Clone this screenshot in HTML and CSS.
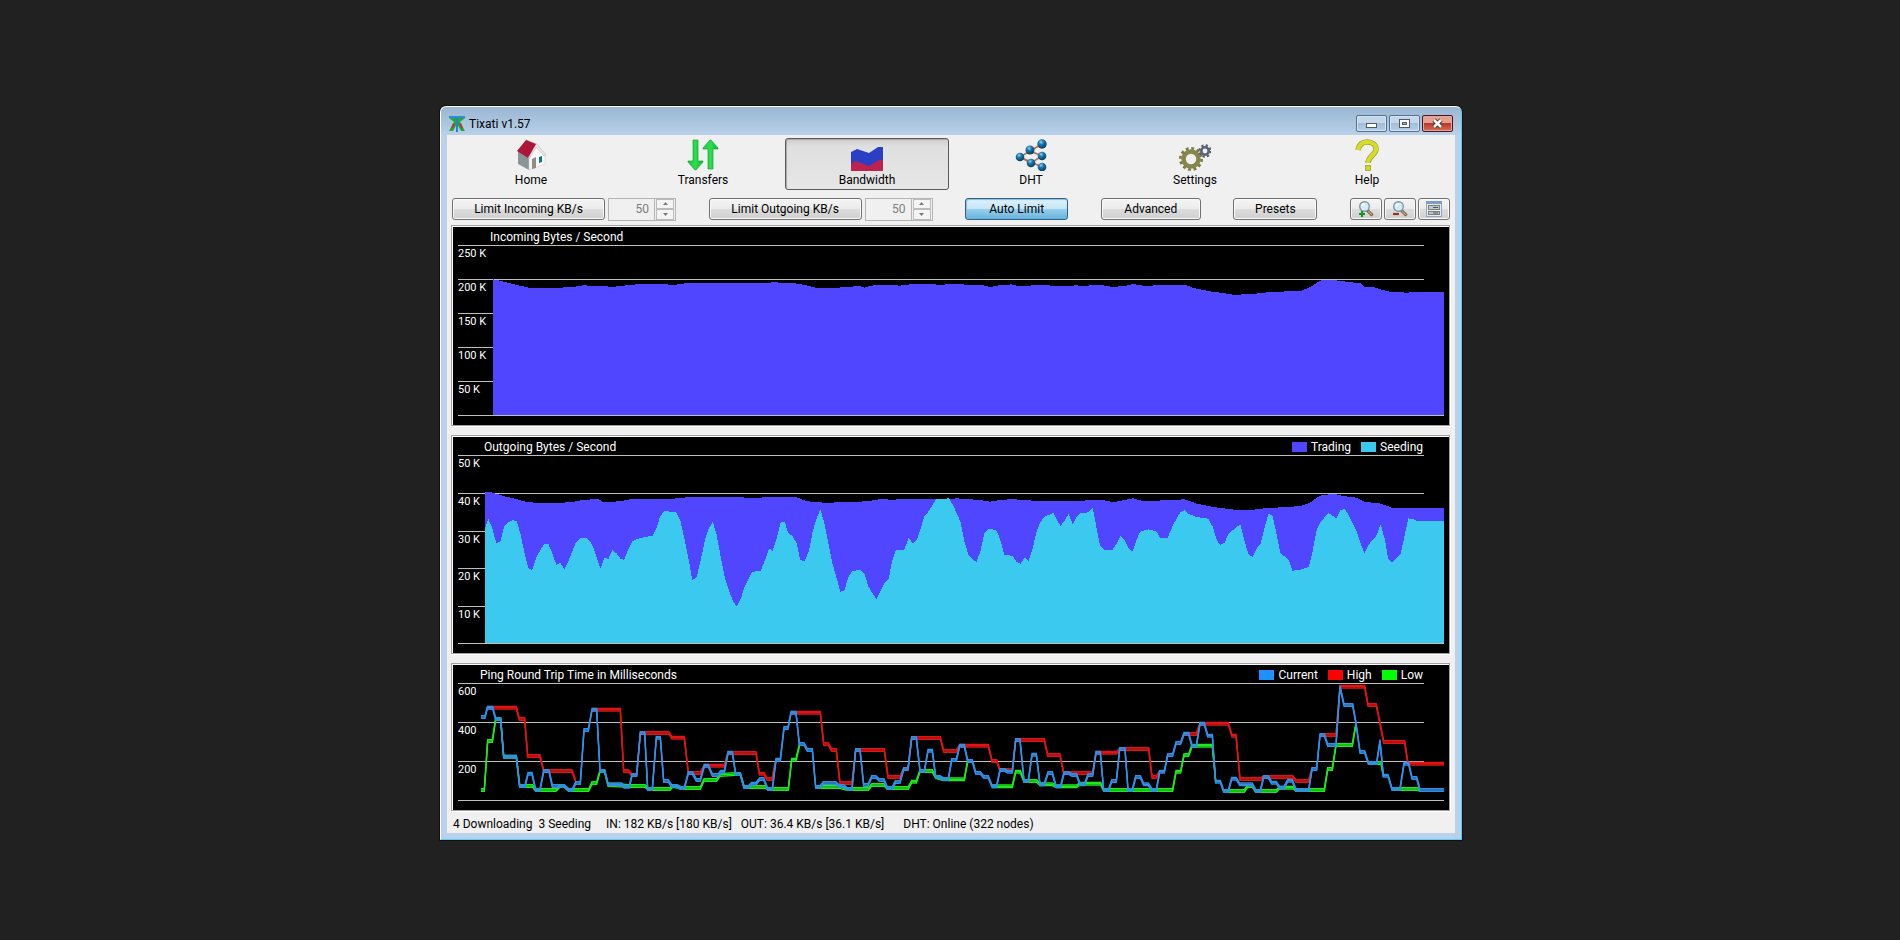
FILE: index.html
```html
<!DOCTYPE html>
<html lang="en">
<head>
<meta charset="utf-8">
<title>Tixati v1.57</title>
<link rel="stylesheet" href="styles.css">
</head>
<body>
<main class="window">
  <header class="titlebar">
    <svg class="app-icon" viewBox="0 0 16 16" aria-hidden="true">
      <path d="M0 0h16v2l-5 4 5 9h-4L8 8l-4 7H0l5-9-5-4z" fill="#22a83c"/>
      <path d="M0 0h16v2H0z" fill="#2a8fd0"/>
      <path d="M4 7l2 1-3 5-1-1zM12 7l-2 1 3 5 1-1z" fill="#b23a3a"/>
      <path d="M7 2h2v14H7z" fill="#2b7fd0"/>
    </svg>
    <h1 class="title">Tixati v1.57</h1>
    <div class="window-buttons">
      <button class="win-btn" type="button" aria-label="Minimize"><svg viewBox="0 0 29 15"><rect x="9.500" y="7.500" width="10" height="4" fill="#fff" stroke="#4c5a6c"/></svg></button>
      <button class="win-btn" type="button" aria-label="Maximize"><svg viewBox="0 0 29 15"><rect x="9.500" y="3.500" width="10" height="8" fill="#fff" stroke="#4c5a6c"/><rect x="12.500" y="6.500" width="4" height="2" fill="#9db6d2" stroke="#4c5a6c"/></svg></button>
      <button class="win-btn win-close" type="button" aria-label="Close"><svg viewBox="0 0 29 15"><path d="M11 4l7 7M18 4l-7 7" stroke="#5a2a2a" stroke-width="4.500"/><path d="M11 4l7 7M18 4l-7 7" stroke="#fff" stroke-width="2.500"/></svg></button>
    </div>
  </header>

  <div class="client">
    <nav class="tabs">
      <button class="tab tab-first" type="button">
        <svg viewBox="0 0 32 32">
          <defs><linearGradient id="wall" x1="0" x2="1"><stop offset="0" stop-color="#f4f4f4"/><stop offset="1" stop-color="#fff"/></linearGradient></defs>
          <path d="M3 12l11 7v12L3 25z" fill="#8b9597"/>
          <path d="M14 19l7-13 9 11v8l-16 6z" fill="url(#wall)" stroke="#c9cfd0" stroke-width=".6"/>
          <path d="M11 1l11 4 9 11-2 1-8-9-7 12-1-1 7-13z" fill="#e8e8ea" stroke="#99a" stroke-width=".4"/>
          <path d="M11 1l10 4-8 14L2 12z" fill="#ac1638"/>
          <path d="M17 20l4-2v11l-4 1z" fill="#958a82"/>
          <path d="M24 18l3-1v6l-3 1z" fill="#0c7296"/>
        </svg>
        Home
      </button>
      <button class="tab" type="button">
        <svg viewBox="0 0 32 32">
          <defs><linearGradient id="arrow" x1="0" x2="1"><stop offset="0" stop-color="#1fc540"/><stop offset=".5" stop-color="#27e04c"/><stop offset="1" stop-color="#12b535"/></linearGradient></defs>
          <path d="M6 1h5v21h5v1l-7 8H8l-7-8v-1h5z" fill="url(#arrow)" stroke="#22a23c" stroke-width=".7"/>
          <path d="M21 30h5V10h5V9l-7-8h-1l-7 8v1h5z" fill="url(#arrow)" stroke="#22a23c" stroke-width=".7"/>
        </svg>
        Transfers
      </button>
      <button class="tab tab-active" type="button" aria-pressed="true">
        <svg viewBox="0 0 32 32">
          <path d="M0 13l6-3 12 4L27 8h5v24H0z" fill="#2b3fc4"/>
          <path d="M0 25l4-3 3 1 11 4 10-6h4v11H0z" fill="#bd2150"/>
        </svg>
        Bandwidth
      </button>
      <button class="tab" type="button">
        <svg viewBox="0 0 32 32">
          <defs><radialGradient id="ball" cx=".4" cy=".3" r=".7"><stop offset="0" stop-color="#8fd4ee"/><stop offset=".4" stop-color="#1a78ab"/><stop offset="1" stop-color="#063e62"/></radialGradient></defs>
          <path d="M5 18l10-6L27 5M15 12l12 5-11 7-11-6 22 10" fill="none" stroke="#c4684a" stroke-width="1.600"/>
          <g fill="url(#ball)"><circle cx="27" cy="5" r="4.700"/><circle cx="15" cy="11" r="4.500"/><circle cx="5" cy="18" r="4.300"/><circle cx="27" cy="17" r="4.300"/><circle cx="16" cy="24" r="4.300"/><circle cx="27" cy="28" r="4.300"/></g>
        </svg>
        DHT
      </button>
      <button class="tab" type="button">
        <svg viewBox="0 0 32 32">
          <circle cx="12" cy="20" r="7.500" fill="none" stroke="#85854c" stroke-width="4.500"/>
          <circle cx="12" cy="20" r="10.700" fill="none" stroke="#7b7b46" stroke-width="2.600" stroke-dasharray="2.900 2.700"/>
          <circle cx="26" cy="12" r="3.700" fill="none" stroke="#5a6273" stroke-width="2.600"/>
          <circle cx="26" cy="12" r="5.700" fill="none" stroke="#535b6c" stroke-width="2" stroke-dasharray="2.300 2.178"/>
        </svg>
        Settings
      </button>
      <button class="tab tab-last" type="button">
        <svg viewBox="0 0 32 32">
          <path d="M7 11c1-5 4-8 9-8 6 0 9 3 9 7 0 6-8 7-8 14" fill="none" stroke="#a3a520" stroke-width="5.500"/>
          <path d="M7 11c1-5 4-8 9-8 6 0 9 3 9 7 0 6-8 7-8 14" fill="none" stroke="#d6dc2c" stroke-width="4"/>
          <rect x="14.500" y="26.500" width="5" height="5" fill="#d0d628" stroke="#a3a520" stroke-width=".8"/>
        </svg>
        Help
      </button>
    </nav>

    <div class="controls">
      <div class="limit">
        <button class="btn btn-limit" type="button">Limit Incoming KB/s</button>
        <div class="spinner">
          <input class="spin-input" type="text" value="50" aria-label="Incoming limit in KB/s" disabled>
          <div class="spin-arrows">
            <button class="spin-btn" type="button" aria-label="Increase incoming limit" disabled><svg viewBox="0 0 5 3"><path d="M0 3l2.500-3L5 3z"/></svg></button>
            <button class="spin-btn" type="button" aria-label="Decrease incoming limit" disabled><svg viewBox="0 0 5 3"><path d="M0 0l2.500 3L5 0z"/></svg></button>
          </div>
        </div>
      </div>
      <div class="limit">
        <button class="btn btn-limit" type="button">Limit Outgoing KB/s</button>
        <div class="spinner">
          <input class="spin-input" type="text" value="50" aria-label="Outgoing limit in KB/s" disabled>
          <div class="spin-arrows">
            <button class="spin-btn" type="button" aria-label="Increase outgoing limit" disabled><svg viewBox="0 0 5 3"><path d="M0 3l2.500-3L5 3z"/></svg></button>
            <button class="spin-btn" type="button" aria-label="Decrease outgoing limit" disabled><svg viewBox="0 0 5 3"><path d="M0 0l2.500 3L5 0z"/></svg></button>
          </div>
        </div>
      </div>
      <button class="btn btn-auto" type="button" aria-pressed="true">Auto Limit</button>
      <button class="btn btn-advanced" type="button">Advanced</button>
      <button class="btn btn-presets" type="button">Presets</button>
      <div class="tools">
        <button class="btn btn-icon" type="button" aria-label="Zoom in">
          <svg viewBox="0 0 16 16"><path d="M9 9l5.500 5.500" stroke="#5c4a38" stroke-width="3"/><path d="M10 10l4 4" stroke="#d8a868" stroke-width="1.500"/><circle cx="6.500" cy="5.500" r="4.800" fill="#d4ecf8" stroke="#7d96ac" stroke-width="1.400"/><path d="M4 5a3 3 0 0 1 3-2" fill="none" stroke="#fff" stroke-width="1.400"/><path d="M4 10v6M1 13h6" stroke="#0d9a1c" stroke-width="2.200"/></svg>
        </button>
        <button class="btn btn-icon" type="button" aria-label="Zoom out">
          <svg viewBox="0 0 16 16"><path d="M9 9l5.500 5.500" stroke="#5c4a38" stroke-width="3"/><path d="M10 10l4 4" stroke="#d8a868" stroke-width="1.500"/><circle cx="6.500" cy="5.500" r="4.800" fill="#d4ecf8" stroke="#7d96ac" stroke-width="1.400"/><path d="M4 5a3 3 0 0 1 3-2" fill="none" stroke="#fff" stroke-width="1.400"/><path d="M1 13h6" stroke="#a33212" stroke-width="2.200"/></svg>
        </button>
        <button class="btn btn-icon" type="button" aria-label="View layout">
          <svg viewBox="0 0 16 16"><rect x=".5" y=".5" width="15" height="15" fill="#e4ebf5" stroke="#93a5c0"/><path d="M0 0h16v3H0z" fill="#7f9bc6"/><rect x="2.500" y="4.500" width="11" height="4" fill="#c4c8c4" stroke="#7a827c"/><rect x="2.500" y="10.500" width="11" height="3" fill="#c4c8c4" stroke="#7a827c"/><path d="M7 6.500h5M7 12h5" stroke="#4c5450"/></svg>
        </button>
      </div>
    </div>

    <div class="panels">
      <section class="panel">
        <div class="panel-head head-incoming"><h2 class="panel-title">Incoming Bytes / Second</h2></div>
        <svg class="plot" viewBox="39 75 2988 540">
          <path class="grid" d="M54 76.500H2952M54 178.500H2952M54 280.500H159M54 382.500H159M54 484.500H159"/>
          <path class="fill-trading" d="M159 587V178L180 182 210 190 240 197 270 204 340 205 375 202 400 201 430 196 500 199 515 201 560 196 600 192 680 193 700 195 750 188 800 190 870 188 960 190 1000 187 1060 189 1090 194 1130 204 1180 204 1220 201 1260 198 1273 203 1290 197 1340 194 1380 197 1410 193 1450 192 1500 194 1530 193 1570 193 1590 196 1630 196 1652 201 1670 197 1715 193 1730 197 1820 196 1870 199 1910 196 1930 199 1950 196 1990 196 2020 201 2060 197 2080 192 2110 197 2170 196 2240 196 2260 204 2310 214 2350 219 2380 224 2430 223 2470 218 2540 214 2585 212 2615 199 2640 182 2660 179 2695 182 2725 186 2762 190 2775 201 2800 201 2825 209 2850 215 2900 218 2930 216 3012 216V587z"/>
          <path class="grid" d="M54 586.500H3012"/>
          <g class="axis"><text x="54" y="110">250 K</text><text x="54" y="212">200 K</text><text x="54" y="314">150 K</text><text x="54" y="416">100 K</text><text x="54" y="518">50 K</text></g>
        </svg>
      </section>

      <section class="panel">
        <div class="panel-head head-outgoing">
          <h2 class="panel-title">Outgoing Bytes / Second</h2>
          <ul class="legend"><li class="key key-trading">Trading</li><li class="key key-seeding">Seeding</li></ul>
        </div>
        <svg class="plot" viewBox="39 90 2988 594">
          <path class="grid" d="M54 91.500H2952M54 205.500H2952M54 319.500H135M54 430.500H135M54 544.500H135"/>
          <path class="fill-trading" d="M135 655V202L155 202 190 213 220 220 260 231 300 234 370 233 410 229 430 224 475 223 490 231 540 229 580 221 700 221 760 215 900 217 950 219 990 215 1040 215 1070 217 1090 225 1120 232 1170 233 1220 231 1280 229 1330 221 1350 225 1400 221 1480 221 1530 222 1550 220 1620 225 1650 230 1680 225 1720 222 1750 226 1880 229 1920 228 1960 224 2000 227 2020 232 2040 228 2080 220 2110 229 2170 226 2235 223 2270 236 2320 246 2390 255 2440 254 2490 248 2540 247 2585 242 2610 233 2640 212 2680 206 2710 213 2750 218 2775 232 2810 233 2835 240 2855 248 2900 250 3012 249V655z"/>
          <path class="fill-seeding" d="M135 656V310L145 282 157 310 169 355 181 350 192 306 205 292 218 285 231 290 242 330 255 390 265 430 277 435 290 395 300 377 313 357 325 357 337 385 349 419 361 414 373 433 385 410 397 378 408 352 420 340 440 340 452 352 462 372 473 405 481 432 493 398 505 402 517 376 530 385 542 402 553 404 565 372 578 348 590 342 610 337 638 332 650 308 660 275 673 258 708 262 722 290 735 350 747 410 757 465 770 457 782 405 795 345 806 312 818 290 830 330 842 395 855 460 868 500 880 530 890 544 903 520 912 490 925 462 937 441 962 437 975 405 987 370 998 377 1010 340 1022 293 1034 290 1045 325 1057 332 1070 355 1080 403 1093 410 1107 378 1118 320 1130 280 1141 252 1153 295 1165 355 1177 415 1190 460 1201 500 1213 497 1225 457 1237 438 1262 435 1274 447 1285 485 1298 505 1309 522 1321 500 1333 475 1346 462 1357 405 1368 375 1393 374 1406 338 1418 355 1430 346 1442 310 1453 275 1470 253 1488 223 1528 220 1545 253 1562 292 1573 348 1585 388 1598 403 1609 411 1621 380 1633 325 1646 310 1670 317 1681 345 1693 390 1717 392 1729 410 1742 416 1754 398 1766 408 1778 370 1790 318 1802 290 1815 274 1840 264 1850 284 1862 303 1874 286 1886 267 1898 298 1910 275 1920 265 1945 262 1958 249 1969 305 1980 362 1992 375 2017 375 2030 355 2041 333 2052 342 2065 368 2077 381 2088 350 2100 320 2125 313 2150 320 2161 340 2183 338 2197 305 2210 280 2221 262 2234 256 2246 267 2270 276 2305 281 2318 305 2330 345 2341 360 2355 352 2365 326 2385 310 2401 298 2413 345 2426 390 2438 396 2450 370 2462 355 2473 310 2485 267 2498 272 2510 330 2521 384 2547 405 2557 437 2581 434 2607 425 2618 378 2630 315 2641 292 2665 264 2689 280 2701 255 2715 252 2727 272 2750 318 2762 355 2773 385 2785 360 2809 332 2822 298 2835 345 2845 403 2858 412 2882 388 2894 330 2905 280 2925 284 2930 288 3012 288V656z"/>
          <path class="grid" d="M54 655.500H3012"/>
          <g class="axis"><text x="54" y="125">50 K</text><text x="54" y="239">40 K</text><text x="54" y="353">30 K</text><text x="54" y="464">20 K</text><text x="54" y="578">10 K</text></g>
        </svg>
      </section>

      <section class="panel">
        <div class="panel-head head-ping">
          <h2 class="panel-title">Ping Round Trip Time in Milliseconds</h2>
          <ul class="legend"><li class="key key-current">Current</li><li class="key key-high">High</li><li class="key key-low">Low</li></ul>
        </div>
        <svg class="plot" viewBox="39 84 2988 381">
          <path class="grid" d="M54 85.500H2952M54 202.500H2952M54 319.500H2952M54 436.500H3012"/>
          <g class="line line-high">
            <path id="high" d="M142 158H229L238 192H254L263 303H300L311 348H396L407 378M456 164H541L551 348H565L576 360H590L601 234H687L696 248H733L745 354H781L793 332H853L864 294H948L958 356H972L981 372H996L1008 314M1053 173H1141L1151 267H1165L1175 285H1189L1200 384H1236L1247 285H1333L1344 366H1380L1391 342H1404L1415 249H1501L1511 288H1549L1559 272H1645L1656 318H1670L1680 345H1717L1727 255H1813L1823 300H1860L1871 354H1958L1968 293H2030L2040 282H2126L2136 366H2149L2159 350M2232 237H2269L2280 206H2365L2376 242H2388L2400 372H2462L2471 366H2559L2568 378H2606L2616 342M2640 240H2688L2700 95H2774L2784 150H2809L2820 205 2831 261H2894L2904 326H3012"/>
            <use href="#high" y="-4"/><use href="#high" y="4"/>
          </g>
          <g class="line line-low">
            <path id="low" d="M123 405H133L143 258H157L167 192H182L191 305H229L239 393H278L287 405H348L360 393H372L386 405H446L456 384H470L480 348H494L504 390 575 393H615L625 402H690L698 393 712 395 722 399H781L792 375H830L840 360 885 357H901L912 396H977L985 402H1045L1055 314H1068L1079 267M1127 396H1198L1222 402H1285L1295 390H1333L1342 399H1405L1415 380H1429L1440 348H1477L1487 366 1510 373H1573L1583 318M1656 394H1717L1727 350H1741L1752 378H1790L1800 388H1837L1848 394H1910L1920 386H1982L1991 405H2198L2208 350H2222L2232 300H2246L2256 272H2317L2327 380M2351 408H2413L2423 393H2437L2447 408H2509L2519 398H2560L2568 405H2653L2663 342H2677L2688 270H2737L2748 205M2785 324H2823L2830 362M2856 402H2932L2940 405"/>
            <use href="#low" y="-4"/><use href="#low" y="4"/>
          </g>
          <g class="line line-current">
            <path id="current" d="M123 186H135L142 158H158L167 192H182L191 305H229L239 393H255L264 356H276L287 405H300L311 348H327L337 393H373L386 405H397L407 384H421L432 225H445L456 164H470L480 348H494L504 388H545L552 395H568L576 360H590L601 234H614L623 402H637L649 248H661L671 378H685L695 393H712L722 399H733L745 354H757L769 375H781L793 332H805L817 360H835L842 350H853L864 293H877L887 357H901L912 396H925L935 386H948L959 372H971L983 402H997L1008 314H1021L1032 219H1044L1053 173H1068L1078 267H1092L1102 285H1117L1127 396H1140L1150 384H1188L1198 393H1212L1222 402H1236L1247 285H1260L1271 390H1284L1295 366H1308L1318 375H1332L1342 399H1357L1366 381H1380L1391 342H1404L1415 249H1429L1440 348H1453L1464 287H1477L1487 366H1500L1510 372H1525L1535 315H1549L1559 272H1573L1583 318H1597L1607 354H1621L1631 366H1645L1656 394H1670L1680 345H1695L1702 350H1717L1727 255H1740L1752 378H1765L1776 299H1789L1800 388H1813L1824 354H1837L1848 394H1862L1872 354H1886L1896 360H1910L1920 388H1934L1944 360H1958L1968 293H1981L1991 405H2006L2015 378H2029L2039 282H2055L2064 405H2077L2087 366H2101L2111 388H2125L2136 405H2149L2159 350H2173L2183 300H2198L2208 264H2222L2232 236H2246L2256 273H2269L2280 206H2293L2303 242H2317L2327 380H2341L2351 408H2365L2375 371H2389L2399 388H2437L2447 408H2461L2471 366H2485L2495 383H2509L2519 398H2532L2543 377H2557L2568 405H2606L2616 342H2630L2640 240H2653L2663 270H2688L2700 95 2712 150H2738L2748 205 2760 291H2774L2785 324H2810L2820 258 2830 362H2844L2856 402H2880L2892 326H2906L2916 369H2930L2940 405H3012"/>
            <use href="#current" y="-4"/><use href="#current" y="4"/>
          </g>
          <g class="axis"><text x="54" y="119">600</text><text x="54" y="236">400</text><text x="54" y="353">200</text></g>
        </svg>
      </section>
    </div>

    <footer class="status">
      <span class="stat-torrents"><span>4 Downloading</span><span>3 Seeding</span></span>
      <span>IN: 182 KB/s [180 KB/s]</span>
      <span>OUT: 36.4 KB/s [36.1 KB/s]</span>
      <span class="stat-dht">DHT: Online (322 nodes)</span>
    </footer>
  </div>
</main>
</body>
</html>
```

FILE: styles.css
```css
* {
  box-sizing: border-box;
}

body {
  margin: 0;
  min-height: 100vh;
  padding: 106px 0 0 2px;
  background: #212121;
  color: #000;
  font: 12px/16px Roboto, "Noto Sans", sans-serif;
}

button,
input {
  font: inherit;
  color: inherit;
  margin: 0;
  padding: 0;
}

svg {
  display: block;
}

.window {
  width: 100%;
  max-width: 1022px;
  margin: 0 auto;
  padding: 0 6px 6px;
  border: 1px solid #fff;
  border-right-color: #5ccdf0;
  border-bottom-color: #5ccdf0;
  border-radius: 6px 6px 0 0;
  background: linear-gradient(#9ab6d2, #b9d1ea 28px, #b9d1ea);
  box-shadow: 0 0 0 1px #111;
}

.titlebar {
  display: flex;
  align-items: center;
  height: 28px;
  padding: 7px 2px 2px;
}

.app-icon {
  width: 16px;
  height: 16px;
}

.title {
  flex: 1;
  margin: 0 0 0 4px;
  font-size: 12px;
  font-weight: 400;
}

.window-buttons {
  display: flex;
  gap: 2px;
}

.win-btn {
  width: 31px;
  height: 17px;
  border: 1px solid #54708f;
  border-radius: 2px;
  background: linear-gradient(#c3d6ea 0 50%, #a3bdd9 50%, #b6cde6);
  box-shadow: inset 0 0 0 1px #d5e4f3;
}

.win-btn svg {
  width: 29px;
  height: 15px;
}

.win-close {
  border-color: #4c1520;
  background: linear-gradient(#e2a193 0 50%, #b9382a 50%, #d0705c);
  box-shadow: inset 0 0 0 1px #e3a79c;
}

.client {
  background: #f0f0f0;
}

.tabs {
  display: flex;
  justify-content: space-between;
  padding: 3px 6px 0 2px;
}

.tab {
  display: flex;
  flex: 1;
  flex-direction: column;
  align-items: center;
  height: 52px;
  gap: 1px;
  border: 1px solid transparent;
  border-radius: 3px;
  background: none;
}

.tab svg {
  width: 32px;
  height: 32px;
}

.tab-first {
  margin-right: 8px;
}

.tab-last {
  margin-left: 8px;
}

.tab-active {
  border-color: #5a5a5a;
  background: linear-gradient(#cfcfcf, #e0e0e0 8px, #e6e6e6);
  box-shadow: inset 1px 1px 1px #a8a8a8;
}

.controls {
  display: flex;
  align-items: center;
  justify-content: space-between;
  height: 24px;
  margin-top: 7px;
  padding: 0 5px;
}

.limit {
  display: flex;
  align-items: center;
  gap: 3px;
}

.btn {
  height: 22px;
  border: 1px solid #707070;
  border-radius: 3px;
  background: linear-gradient(#f4f4f4, #ebebeb 50%, #dddddd 50%, #cfcfcf);
  box-shadow: inset 0 0 0 1px #fafafa;
  line-height: 20px;
}

.btn-limit {
  width: 153px;
}

.btn-auto {
  width: 103px;
  border-color: #2c628b;
  background: linear-gradient(#dff2fc, #c4e5f6 50%, #98d1ef 50%, #68b3db);
  box-shadow: inset 1px 1px 1px #8fb8d0;
}

.btn-advanced {
  width: 100px;
}

.btn-presets {
  width: 84px;
}

.tools {
  display: flex;
  gap: 2px;
}

.btn-icon {
  display: flex;
  align-items: center;
  justify-content: center;
  width: 32px;
}

.btn-icon svg {
  width: 16px;
  height: 16px;
}

.spinner {
  display: flex;
  width: 68px;
  height: 23px;
  border: 1px solid #b4b4b4;
  background: #f0f0f0;
}

.spin-input {
  flex: 1;
  min-width: 0;
  padding-right: 5px;
  border: 0;
  border-right: 1px solid #b4b4b4;
  background: none;
  color: #7d7d7d;
  text-align: right;
}

.spin-arrows {
  display: grid;
  width: 20px;
  padding: 0 1px;
}

.spin-btn {
  display: flex;
  align-items: center;
  justify-content: center;
  border: 1px solid #bcbcbc;
  background: #f4f4f4;
}

.spin-btn svg {
  width: 5px;
  height: 3px;
  fill: #7a7a7a;
}

.panels {
  display: grid;
  gap: 9px;
  padding: 4px 5px 0 4px;
}

.panel {
  padding: 1px 0 0 1px;
  border: 1px solid #a0a0a0;
  background: #000;
  box-shadow: inset 1px 1px 0 #fff, 1px 1px 0 #fff;
  color: #fff;
}

.panel-head {
  display: flex;
  align-items: center;
  justify-content: space-between;
  height: 18px;
  padding-top: 2px;
  padding-right: 26px;
}

.head-incoming {
  padding-left: 37px;
}

.head-outgoing {
  padding-left: 31px;
}

.head-ping {
  padding-left: 27px;
}

.panel-title {
  margin: 0;
  font-size: 12px;
  font-weight: 400;
}

.legend {
  display: flex;
  gap: 10px;
  margin: 0;
  padding: 0;
  list-style: none;
}

.key {
  display: flex;
  align-items: center;
  gap: 4px;
}

.key::before {
  content: "";
  width: 15px;
  height: 10px;
}

.key-trading::before {
  background: #5046ff;
}

.key-seeding::before {
  background: #3bc9ef;
}

.key-current::before {
  background: #1e90ff;
}

.key-high::before {
  background: #f00;
}

.key-low::before {
  background: #0f0;
}

.plot {
  width: 100%;
  height: auto;
}

.grid {
  fill: none;
  stroke: #c0c0b8;
  stroke-width: 3;
  shape-rendering: crispEdges;
}

.fill-trading {
  fill: #5046ff;
  shape-rendering: crispEdges;
}

.fill-seeding {
  fill: #3bc9ef;
  shape-rendering: crispEdges;
}

.line {
  fill: none;
  stroke-width: 4;
}

.line-high {
  stroke: #e01414;
}

.line-low {
  stroke: #1ee81e;
}

.line-current {
  stroke: #3090e8;
}

.axis {
  fill: #fff;
  font-size: 33px;
}

.status {
  display: flex;
  align-items: center;
  gap: 9px;
  height: 22px;
  padding: 3px 6px 0;
}

.stat-torrents {
  display: flex;
  gap: 6px;
  margin-right: 6px;
}

.stat-dht {
  margin-left: 10px;
}
```
